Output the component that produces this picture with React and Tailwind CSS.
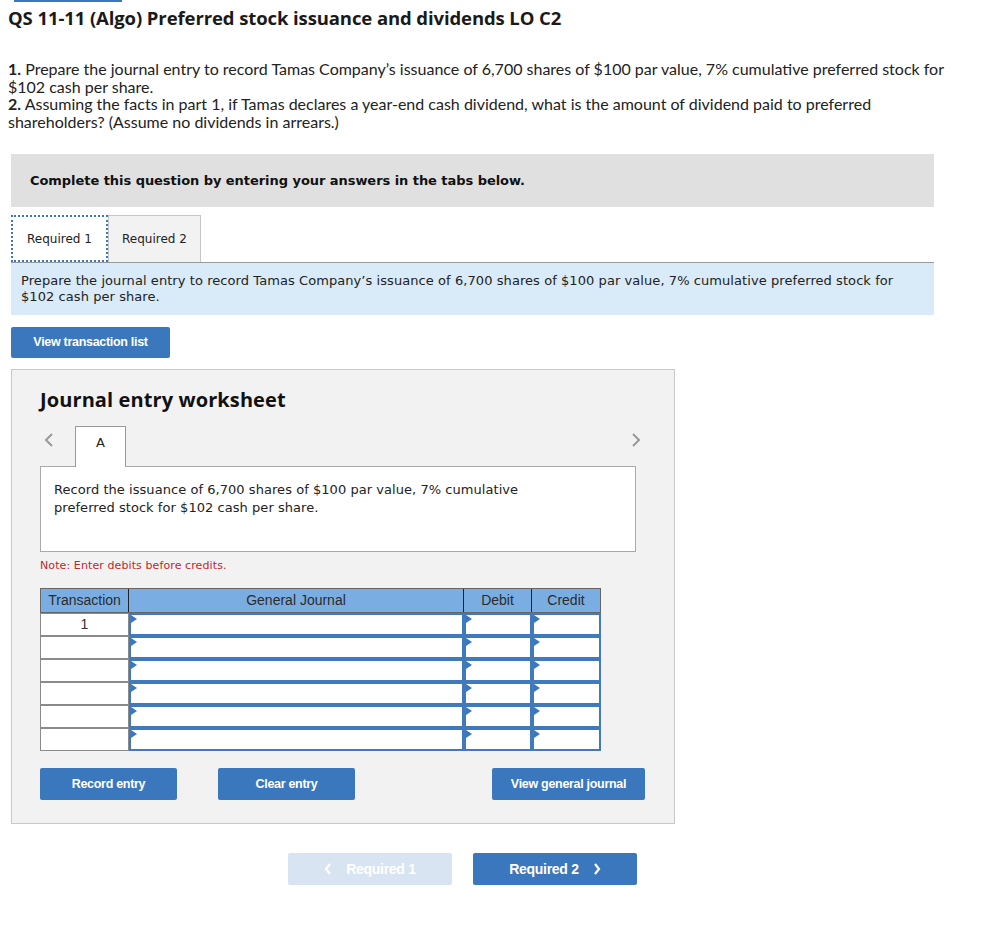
import React from "react";

const Tri = () => (
  <svg className="absolute left-0 top-0" width="6" height="8" viewBox="0 0 6 8">
    <polygon points="0,0 6,4 0,8" fill="#3b77bc" />
  </svg>
);

function Row({ n }) {
  return (
    <div className="flex">
      <div className="w-[89px] h-[23px] border border-[#8a8a8a] bg-white flex items-center justify-center text-[14px] text-[#333]" style={{ fontFamily: "'Liberation Sans', Arial, sans-serif" }}>
        {n}
      </div>
      <div className="relative h-[23px] w-[335px] border-2 border-[#4179bd] bg-white"><Tri /></div>
      <div className="relative h-[23px] w-[68px] border-2 border-[#4179bd] bg-white"><Tri /></div>
      <div className="relative h-[23px] w-[69px] border-2 border-[#4179bd] bg-white"><Tri /></div>
    </div>
  );
}

const btnFont = { fontFamily: "'Liberation Sans', Arial, sans-serif", letterSpacing: "-0.3px" };
const verdana = { fontFamily: "'DejaVu Sans', Verdana, sans-serif" };

export default function App() {
  return (
    <div className="relative bg-white w-[988px] h-[935px] text-[#222]">
      <div className="absolute left-[14px] top-0 w-[108px] h-[2px] bg-[#3b77bc]" />
      <div className="pt-[6px] pl-[8px]">
        <h1 className="text-[18.5px] font-bold text-[#1a1a1a] leading-[23px] tracking-[-0.1px]" style={{ fontFamily: "'Open Sans', Lato, sans-serif" }}>
          QS 11-11 (Algo) Preferred stock issuance and dividends LO C2
        </h1>
        <div className="mt-[31px] w-[950px] text-[16px] leading-[17.5px] text-[#222]" style={{ fontFamily: "Lato, 'Open Sans', sans-serif" }}>
          <p><b>1.</b> Prepare the journal entry to record Tamas Company’s issuance of 6,700 shares of $100 par value, 7% cumulative preferred stock for $102 cash per share.</p>
          <p><b>2.</b> Assuming the facts in part 1, if Tamas declares a year-end cash dividend, what is the amount of dividend paid to preferred shareholders? (Assume no dividends in arrears.)</p>
        </div>
      </div>

      <div className="ml-[11px] w-[923px]" style={verdana}>
        <div className="mt-[24px] h-[53px] bg-[#e0e0e0] flex items-center pl-[19px] text-[13px] font-bold text-[#111] tracking-[-0.05px]">
          Complete this question by entering your answers in the tabs below.
        </div>

        <div className="mt-[8px] flex items-end border-b border-[#9a9a9a]">
          <div className="w-[97px] h-[47px] bg-white border-2 border-dotted border-[#3b77bc] flex items-center justify-center text-[12px] text-[#222]">
            Required 1
          </div>
          <div className="w-[93px] h-[47px] bg-[#f2f2f2] border border-[#c6c6c6] border-b-0 flex items-center justify-center text-[12px] text-[#222]">
            Required 2
          </div>
        </div>

        <div className="bg-[#d9eaf8] px-[10px] pt-[10px] text-[13px] leading-[16px] text-[#222] tracking-[0.07px] h-[52px]">
          Prepare the journal entry to record Tamas Company’s issuance of 6,700 shares of $100 par value, 7% cumulative preferred stock for $102 cash per share.
        </div>

        <button className="mt-[12px] w-[159px] h-[31px] rounded-[2px] bg-[#3b77bc] text-white text-[12.5px] font-bold" style={btnFont}>
          View transaction list
        </button>

        <div className="mt-[11px] w-[664px] h-[455px] bg-[#f2f2f2] border border-[#c8c8c8] pl-[28px] pt-[18px]">
          <div className="text-[20px] font-bold text-[#111] leading-[24px]" style={{ fontFamily: "'Open Sans', sans-serif", letterSpacing: "0.1px" }}>
            Journal entry worksheet
          </div>

          <div className="mt-[14px] w-[596px] flex items-end h-[40px] relative">
            <svg className="absolute left-[3px] top-[6px]" width="12" height="16" viewBox="0 0 12 16">
              <polyline points="9,2 3,8 9,14" fill="none" stroke="#999" strokeWidth="2" />
            </svg>
            <svg className="absolute right-[-6px] top-[6px]" width="12" height="16" viewBox="0 0 12 16">
              <polyline points="3,2 9,8 3,14" fill="none" stroke="#999" strokeWidth="2" />
            </svg>
            <div className="ml-[35px] w-[51px] h-[41px] bg-white border border-[#999] border-b-0 relative top-[1px] flex justify-center pt-[6px] text-[13px] text-[#222]" style={verdana}>
              A
            </div>
          </div>
          <div className="w-[596px] h-[86px] bg-white border border-[#aaa] pl-[13px] pt-[14px] text-[13px] leading-[18px] text-[#222] tracking-[0.05px]" style={verdana}>
            Record the issuance of 6,700 shares of $100 par value, 7% cumulative<br />preferred stock for $102 cash per share.
          </div>

          <div className="mt-[7px] text-[11px] text-[#c0282d] leading-[14px] tracking-[0.1px]" style={verdana}>
            Note: Enter debits before credits.
          </div>

          <div className="mt-[15px] w-[561px]" style={{ fontFamily: "'Liberation Sans', Arial, sans-serif" }}>
            <div className="flex h-[25px] bg-[#7aaee3] border border-[#666] text-[14px] text-[#2b2b2b]">
              <div className="w-[88px] flex items-center justify-center border-r border-[#222]">Transaction</div>
              <div className="w-[335px] flex items-center justify-center border-r border-[#222]">General Journal</div>
              <div className="w-[68px] flex items-center justify-center border-r border-[#222]">Debit</div>
              <div className="flex-1 flex items-center justify-center">Credit</div>
            </div>
            <Row n="1" />
            <Row n="" />
            <Row n="" />
            <Row n="" />
            <Row n="" />
            <Row n="" />
          </div>

          <div className="mt-[17px] flex w-[605px]">
            <button className="w-[137px] h-[32px] rounded-[2px] bg-[#3b77bc] text-white text-[12.5px] font-bold" style={btnFont}>Record entry</button>
            <button className="ml-[41px] w-[137px] h-[32px] rounded-[2px] bg-[#3b77bc] text-white text-[12.5px] font-bold" style={btnFont}>Clear entry</button>
            <button className="ml-auto w-[153px] h-[32px] rounded-[2px] bg-[#3b77bc] text-white text-[12.5px] font-bold" style={btnFont}>View general journal</button>
          </div>
        </div>

        <div className="mt-[29px] flex gap-[21px] ml-[277px]" style={btnFont}>
          <button className="w-[164px] h-[32px] rounded-[2px] bg-[#d8e4f2] text-white text-[14px] font-bold flex items-center justify-center gap-[14px]">
            <svg width="8" height="12" viewBox="0 0 8 12"><polyline points="6,1 2,6 6,11" fill="none" stroke="#fff" strokeWidth="2.2" /></svg>
            Required 1
          </button>
          <button className="w-[164px] h-[32px] rounded-[2px] bg-[#3b77bc] text-white text-[14px] font-bold flex items-center justify-center gap-[14px]">
            Required 2
            <svg width="8" height="12" viewBox="0 0 8 12"><polyline points="2,1 6,6 2,11" fill="none" stroke="#fff" strokeWidth="2.2" /></svg>
          </button>
        </div>
      </div>
    </div>
  );
}
